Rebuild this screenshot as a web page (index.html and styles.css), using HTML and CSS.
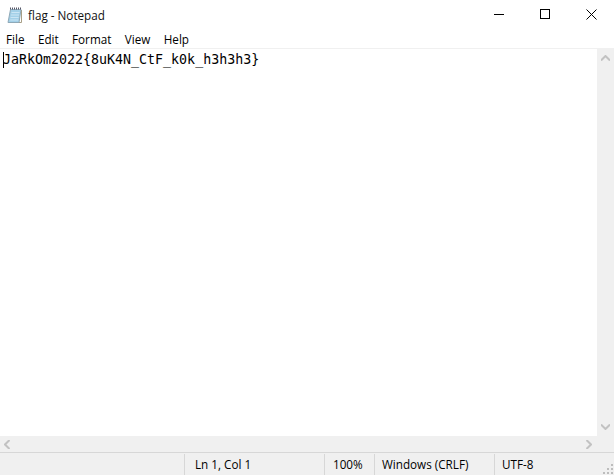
FILE: index.html
```html
<!DOCTYPE html>
<html lang="en">
  <head>
    <meta charset="UTF-8" />
    <link rel="stylesheet" href="styles.css">
    <title>flag - Notepad</title>
  </head>
  <body>
    <div class="window">
      <div class="titlebar">
        <svg class="appIcon" width="16" height="18" viewBox="0 0 16 18">
          <path d="M14.5 4V16.5H12" fill="none" stroke="#a89f86"/>
          <path d="M3.5 3.5H14L12 16.5H1Z" fill="#a3d0e8" stroke="#8fa9b8"/>
          <path d="M4.5 6.5H12.5M4 9H12M3.6 11.5H11.6M3.2 14H11.2" stroke="#cbe5f4"/>
          <path d="M3 2.5H14" stroke="#556" stroke-width="2" stroke-dasharray="1 1"/>
        </svg>
        <span class="title">flag - Notepad</span>
        <div class="winBtns">
          <div class="winBtn">
            <svg width="11" height="11" viewBox="0 0 11 11"><path d="M0 5.5H10" stroke="#000"/></svg>
          </div>
          <div class="winBtn">
            <svg width="11" height="11" viewBox="0 0 11 11"><rect x="0.5" y="0.5" width="9" height="9" fill="none" stroke="#000"/></svg>
          </div>
          <div class="winBtn">
            <svg width="11" height="11" viewBox="0 0 11 11"><path d="M0.5 0.5L10.5 10.5M10.5 0.5L0.5 10.5" stroke="#000"/></svg>
          </div>
        </div>
      </div>
      <div class="menubar">
        <span class="menuItem">File</span>
        <span class="menuItem">Edit</span>
        <span class="menuItem">Format</span>
        <span class="menuItem">View</span>
        <span class="menuItem">Help</span>
      </div>
      <div class="editorRow">
        <div class="editor"><span class="caret"></span>JaRkOm2022{8uK4N_CtF_k0k_h3h3h3}</div>
        <div class="vScroll">
          <svg width="9" height="6" viewBox="0 0 9 6"><path d="M0 5.5L4.5 1L9 5.5" fill="none" stroke="#c2c2c2" stroke-width="2"/></svg>
          <svg width="9" height="6" viewBox="0 0 9 6"><path d="M0 0.5L4.5 5L9 0.5" fill="none" stroke="#c2c2c2" stroke-width="2"/></svg>
        </div>
      </div>
      <div class="hScroll">
        <svg width="6" height="9" viewBox="0 0 6 9"><path d="M5.5 0L1 4.5L5.5 9" fill="none" stroke="#c2c2c2" stroke-width="2"/></svg>
        <svg width="6" height="9" viewBox="0 0 6 9"><path d="M0.5 0L5 4.5L0.5 9" fill="none" stroke="#c2c2c2" stroke-width="2"/></svg>
      </div>
      <div class="statusbar">
        <div class="statusCell cellPos">Ln 1, Col 1</div>
        <div class="statusCell cellZoom">100%</div>
        <div class="statusCell cellEol">Windows (CRLF)</div>
        <div class="statusCell cellEnc">UTF-8</div>
        <svg class="grip" width="12" height="12" viewBox="0 0 12 12">
          <path d="M9 1h2v2H9zM5 5h2v2H5zM9 5h2v2H9zM1 9h2v2H1zM5 9h2v2H5zM9 9h2v2H9z" fill="#bdbdbd"/>
        </svg>
      </div>
    </div>
  </body>
</html>
```

FILE: styles.css
```css
* {
  box-sizing: border-box;
}
html,
body {
  margin: 0;
  height: 100%;
  overflow: hidden;
}
body {
  background: #fff;
  color: #000;
  font-family: "Open Sans", "Noto Sans", "Liberation Sans", sans-serif;
  font-size: 11.7px;
}
.window {
  display: flex;
  flex-direction: column;
  height: 475px;
  width: 614px;
}

.titlebar {
  display: flex;
  align-items: center;
  height: 30px;
  padding-left: 7px;
}
.appIcon {
  margin-right: 5px;
}
.title {
  color: #111;
}
.winBtns {
  display: flex;
  margin-left: auto;
  align-self: flex-start;
}
.winBtn {
  width: 46px;
  height: 29px;
  display: flex;
  align-items: center;
  justify-content: center;
}

.menubar {
  display: flex;
  height: 19px;
  align-items: center;
  border-bottom: 1px solid #f0f0f0;
  padding-left: 6px;
  gap: 13.4px;
}

.editorRow {
  flex: 1;
  display: flex;
  min-height: 0;
}
.editor {
  flex: 1;
  position: relative;
  padding: 3px 0 0 3px;
  font-family: "DejaVu Sans Mono", monospace;
  font-size: 13.3px;
  line-height: 16px;
}
.caret {
  position: absolute;
  left: 3px;
  top: 3px;
  width: 1px;
  height: 16px;
  background: #000;
}
.vScroll {
  width: 17px;
  background: #f0f0f0;
  display: flex;
  flex-direction: column;
  justify-content: space-between;
  align-items: center;
  padding: 6px 0;
}

.hScroll {
  height: 16px;
  background: #f0f0f0;
  display: flex;
  align-items: center;
  justify-content: space-between;
  padding: 0 22px 0 4px;
}

.statusbar {
  height: 23px;
  display: flex;
  position: relative;
  background: #f0f0f0;
  border-top: 1px solid #d7d7d7;
  padding: 1px 0 0 184px;
}
.statusCell {
  display: flex;
  align-items: center;
  border-left: 1px solid #d7d7d7;
  padding-left: 10px;
  padding-bottom: 2px;
}
.cellPos {
  width: 140px;
}
.cellZoom {
  width: 50px;
  padding-left: 8px;
}
.cellEol {
  width: 120px;
  padding-left: 7px;
}
.cellEnc {
  padding-left: 7px;
}
.grip {
  position: absolute;
  right: 0;
  bottom: 0;
}
```
